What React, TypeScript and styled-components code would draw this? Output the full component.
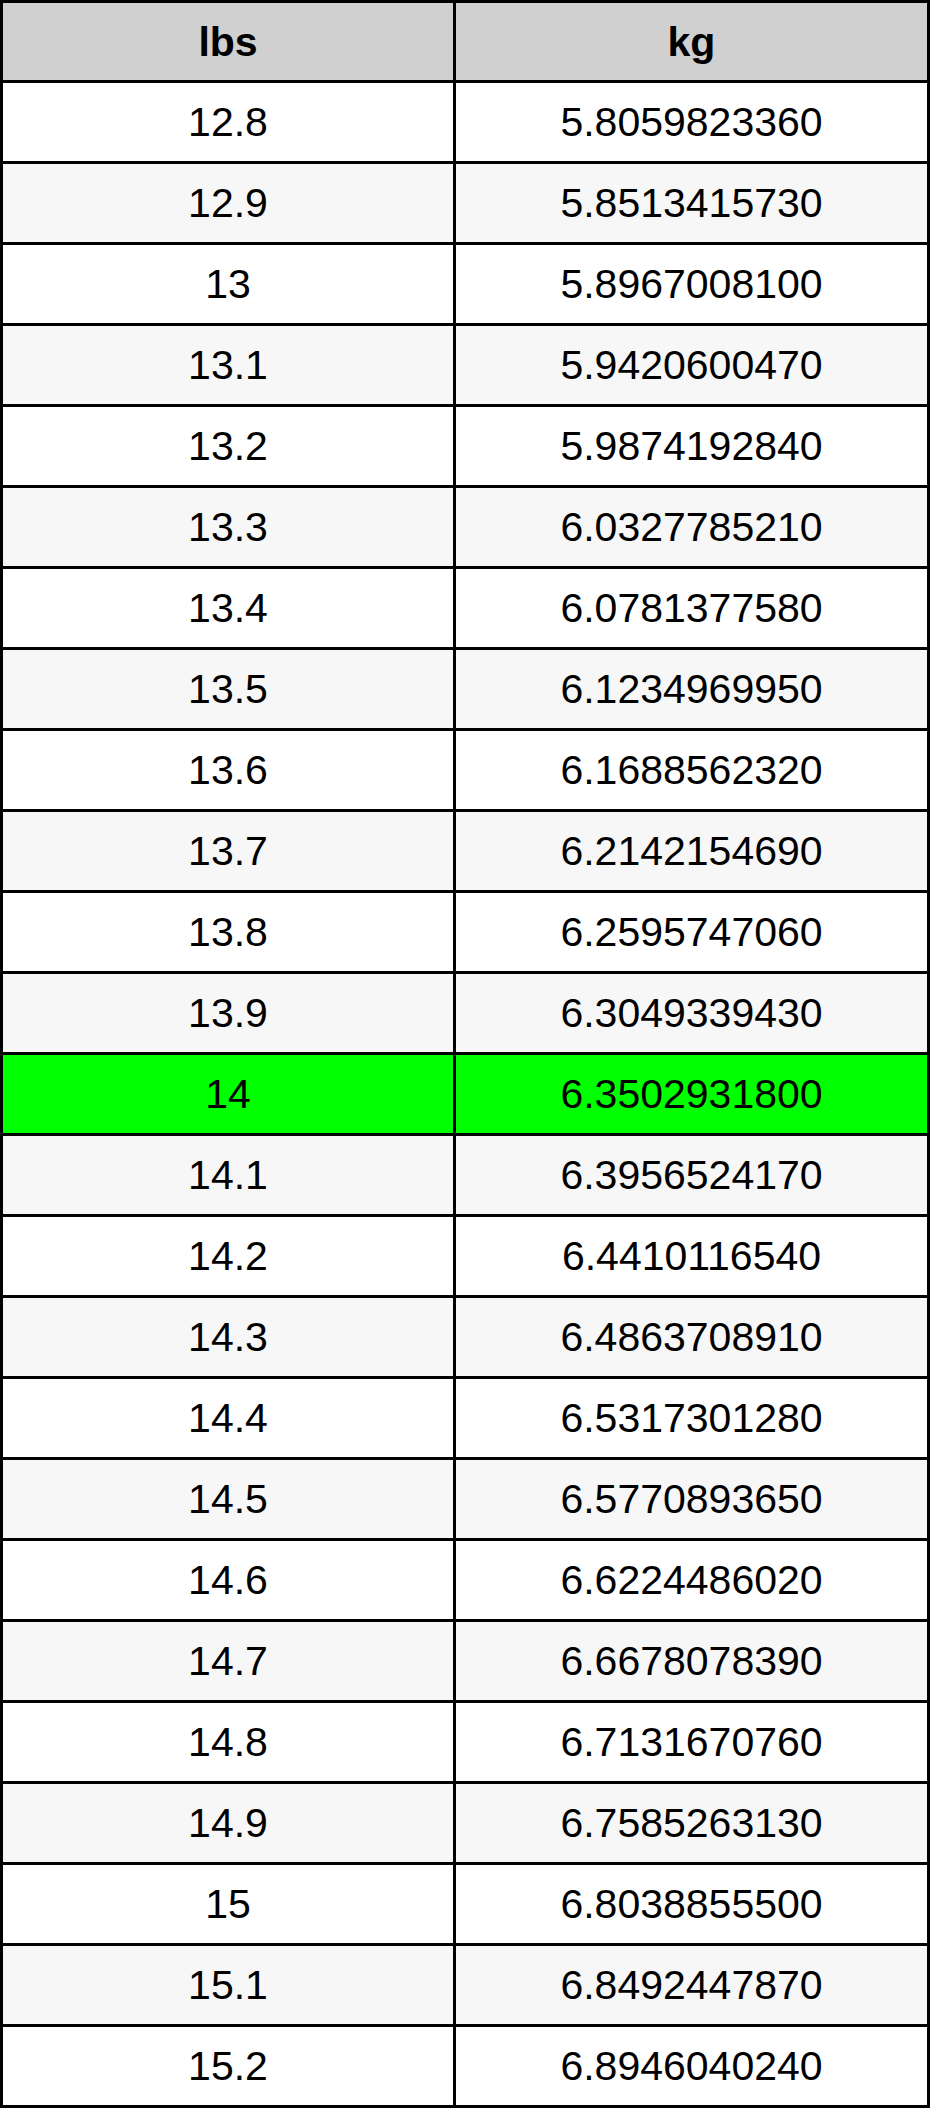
import styled, { createGlobalStyle } from 'styled-components';

const GlobalStyle = createGlobalStyle`
  body {
    margin: 0;
    background: #ffffff;
    font-family: "Liberation Sans", Arial, Helvetica, sans-serif;
  }
`;

const ROWS: [string, string][] = [
  ['12.8', '5.8059823360'],
  ['12.9', '5.8513415730'],
  ['13', '5.8967008100'],
  ['13.1', '5.9420600470'],
  ['13.2', '5.9874192840'],
  ['13.3', '6.0327785210'],
  ['13.4', '6.0781377580'],
  ['13.5', '6.1234969950'],
  ['13.6', '6.1688562320'],
  ['13.7', '6.2142154690'],
  ['13.8', '6.2595747060'],
  ['13.9', '6.3049339430'],
  ['14', '6.3502931800'],
  ['14.1', '6.3956524170'],
  ['14.2', '6.4410116540'],
  ['14.3', '6.4863708910'],
  ['14.4', '6.5317301280'],
  ['14.5', '6.5770893650'],
  ['14.6', '6.6224486020'],
  ['14.7', '6.6678078390'],
  ['14.8', '6.7131670760'],
  ['14.9', '6.7585263130'],
  ['15', '6.8038855500'],
  ['15.1', '6.8492447870'],
  ['15.2', '6.8946040240'],
];

const HIGHLIGHT = '14';

const Table = styled.div`
  width: 930px;
  box-sizing: border-box;
  border-top: 3px solid #000;
  border-left: 3px solid #000;
  display: grid;
  grid-template-columns: 453px 474px;
`;

const Cell = styled.div<{ $bg: string; $head?: boolean }>`
  box-sizing: border-box;
  height: ${(p) => (p.$head ? 80 : 81)}px;
  border-right: 3px solid #000;
  border-bottom: 3px solid #000;
  background: ${(p) => p.$bg};
  display: flex;
  align-items: center;
  justify-content: center;
  color: #000;
  font-size: 41px;
  font-weight: ${(p) => (p.$head ? 700 : 400)};
  padding-top: 1px;
`;

function rowColor(i: number, lbs: string) {
  if (lbs === HIGHLIGHT) return '#00ff00';
  return i % 2 === 0 ? '#ffffff' : '#f7f7f7';
}

export default function App() {
  return (
    <>
      <GlobalStyle />
      <Table>
        <Cell $head $bg="#d0d0d0">lbs</Cell>
        <Cell $head $bg="#d0d0d0">kg</Cell>
        {ROWS.map(([lbs, kg], i) => (
          <>
            <Cell key={lbs + 'a'} $bg={rowColor(i, lbs)}>{lbs}</Cell>
            <Cell key={lbs + 'b'} $bg={rowColor(i, lbs)}>{kg}</Cell>
          </>
        ))}
      </Table>
    </>
  );
}
